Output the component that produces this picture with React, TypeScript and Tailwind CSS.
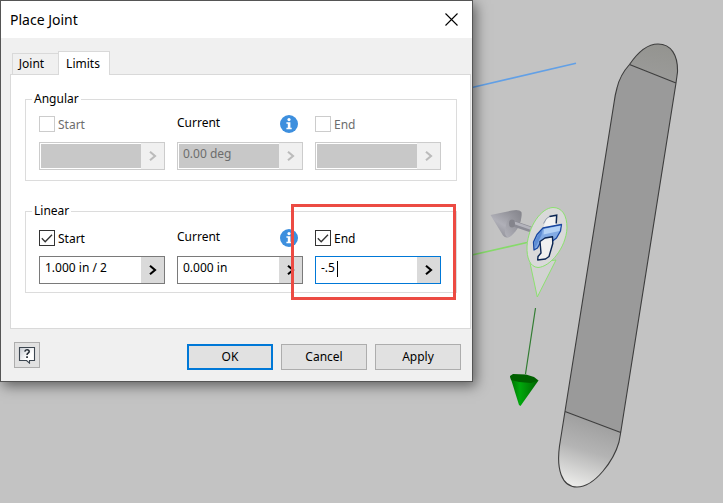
import { useState } from 'react'
import clsx from 'clsx'

export default function App() {
  return (
    <div className="relative min-h-screen overflow-hidden bg-[#c3c3c3] font-['Noto_Sans',sans-serif] text-xs text-black">
      <Scene />
      <PlaceJointDialog />
    </div>
  )
}

function PlaceJointDialog() {
  return (
    <section
      aria-label="Place Joint"
      className="relative w-full max-w-[473px] border border-[#555555] bg-[#f0f0f0] shadow-[3px_4px_12px_rgba(0,0,0,0.5)]"
    >
      <header className="flex h-[37px] items-center justify-between bg-white pr-[14px] pl-[9px]">
        <h1 className="text-sm">Place Joint</h1>
        <button type="button" aria-label="Close">
          <svg viewBox="0 0 13 13" className="size-[13px]" aria-hidden>
            <path d="M.5.5l12 12M12.5.5l-12 12" stroke="#000" strokeWidth="1.1" />
          </svg>
        </button>
      </header>

      <div className="pt-[13px] pr-px pl-[9px]">
        <div role="tablist" className="flex items-end pl-0.5">
          <button
            type="button"
            role="tab"
            aria-selected="false"
            className="h-[21px] w-[46px] border border-r-0 border-b-0 border-[#d9d9d9] pr-2"
          >
            Joint
          </button>
          <button
            type="button"
            role="tab"
            aria-selected="true"
            className="relative -mb-px h-6 w-[52px] border border-b-0 border-[#d9d9d9] bg-white pr-0.5"
          >
            Limits
          </button>
        </div>

        <div className="flex flex-col gap-[22px] border border-[#d9d9d9] bg-white pt-4 pr-[13px] pb-[35px] pl-[14px]">
          <LimitGroup title="Angular" start="" current="0.00 deg" end="" disabled />
          <LimitGroup title="Linear" start="1.000 in / 2" current="0.000 in" end="-.5" marked />
        </div>
      </div>

      <footer className="flex items-start pt-[13px] pr-[11px] pb-[11px] pl-[13px]">
        <button
          type="button"
          aria-label="Help"
          className="flex size-[26px] items-center justify-center border border-[#adadad] bg-[#e1e1e1]"
        >
          <HelpIcon />
        </button>
        <div className="mt-0.5 ml-auto flex gap-2">
          <DialogButton primary>OK</DialogButton>
          <DialogButton>Cancel</DialogButton>
          <DialogButton>Apply</DialogButton>
        </div>
      </footer>
    </section>
  )
}

type LimitGroupProps = {
  title: string
  start: string
  current: string
  end: string
  disabled?: boolean
  marked?: boolean
}

function LimitGroup({ title, start, current, end, disabled, marked }: LimitGroupProps) {
  return (
    <fieldset
      className={clsx(
        'relative h-[90px] border border-[#dcdcdc] pr-[15px] pl-[13px]',
        marked ? 'pt-[11px]' : 'pt-[9px]'
      )}
    >
      <legend className="-ml-[7px] px-0.5 leading-4">{title}</legend>
      <div className="grid grid-cols-3 gap-3">
        <LimitColumn>
          <LimitCheck label="Start" disabled={disabled} />
          <ValueField label={`${title} start value`} value={start} disabled={disabled} />
        </LimitColumn>
        <LimitColumn>
          <div className="flex h-4 items-center justify-between pr-[5px]">
            <span className="pb-0.5">Current</span>
            <InfoIcon />
          </div>
          <ValueField label={`${title} current value`} value={current} disabled={disabled} />
        </LimitColumn>
        <LimitColumn>
          <LimitCheck label="End" disabled={disabled} />
          <ValueField
            label={`${title} end value`}
            value={end}
            disabled={disabled}
            active={marked}
          />
        </LimitColumn>
      </div>
      {marked && (
        <div className="pointer-events-none absolute -top-[15px] right-0 -bottom-4 w-[165px] border-3 border-[#ec4b43]" />
      )}
    </fieldset>
  )
}

function LimitColumn({ children }: { children: React.ReactNode }) {
  return <div className="flex min-w-0 flex-col gap-2.5">{children}</div>
}

function LimitCheck({ label, disabled }: { label: string; disabled?: boolean }) {
  return (
    <label
      className={clsx('flex h-4 items-center gap-[3px]', disabled && 'text-[#6d6d6d]')}
    >
      <span className="relative size-4">
        <input
          type="checkbox"
          defaultChecked={!disabled}
          disabled={disabled}
          className="peer block size-4 appearance-none border border-[#333333] bg-white disabled:border-[#cccccc]"
        />
        <svg
          viewBox="0 0 16 16"
          className="pointer-events-none absolute inset-0 hidden size-4 peer-checked:block"
          aria-hidden
        >
          <path d="M2.8 8.3l3.4 3.4 6.8-7" fill="none" stroke="#333" strokeWidth="1.3" />
        </svg>
      </span>
      <span className="pt-0.5">{label}</span>
    </label>
  )
}

type ValueFieldProps = {
  label: string
  value: string
  disabled?: boolean
  active?: boolean
}

function ValueField({ label, value, disabled, active }: ValueFieldProps) {
  const [text, setText] = useState(value)

  return (
    <div
      className={clsx(
        'relative flex h-7 border bg-white',
        disabled ? 'border-[#cccccc]' : active ? 'border-[#0078d7]' : 'border-[#7a7a7a]'
      )}
    >
      <input
        type="text"
        aria-label={label}
        value={text}
        onChange={(e) => setText(e.target.value)}
        disabled={disabled}
        className="my-px ml-px min-w-0 flex-1 bg-white pb-1 pl-1 outline-none disabled:bg-[#c8c8c8] disabled:text-[#6d6d6d]"
      />
      {active && <span className="absolute top-1 left-[21px] h-4 w-px bg-black" />}
      <button
        type="button"
        aria-label={`${label} options`}
        disabled={disabled}
        className={clsx(
          'flex w-[23px] items-center justify-center',
          disabled ? 'bg-[#f0f0f0] text-[#bbbbbb]' : 'bg-[#dadada] text-black'
        )}
      >
        <svg viewBox="0 0 8 10" className="h-2.5 w-2" aria-hidden>
          <path d="M1 .8l5 4.2-5 4.2" fill="none" stroke="currentColor" strokeWidth="2.1" />
        </svg>
      </button>
    </div>
  )
}

function DialogButton({ primary, children }: { primary?: boolean; children: React.ReactNode }) {
  return (
    <button
      type="button"
      className={clsx(
        'h-[26px] w-[86px] bg-[#e1e1e1]',
        primary ? 'border-2 border-[#0078d7]' : 'border border-[#adadad]'
      )}
    >
      {children}
    </button>
  )
}

function InfoIcon() {
  return (
    <svg viewBox="0 0 18 18" className="size-[18px] flex-none" aria-hidden>
      <circle cx="9" cy="9" r="9" fill="#3d8fde" />
      <circle cx="9" cy="4.6" r="1.6" fill="#fff" />
      <path d="M6.4 7.3h4v5.4h1.3v1.5H6.4v-1.5h1.4V8.8H6.4z" fill="#fff" />
    </svg>
  )
}

function HelpIcon() {
  return (
    <svg viewBox="0 0 18 18" className="size-[18px]" aria-hidden>
      <defs>
        <linearGradient id="help" x1="0" y1="0" x2="1" y2="1">
          <stop offset="0" stopColor="#c6cbd2" />
          <stop offset=".6" stopColor="#fff" />
        </linearGradient>
      </defs>
      <path
        d="M1.5 1.5h15v13h-5v2.6l-2.900-2.600H1.500z"
        fill="url(#help)"
        stroke="#3c4650"
        strokeWidth="1.1"
      />
      <path
        d="M6.800 5.600c.2-1.400 1-1.900 2.200-1.900 1.300 0 2.200.7 2.200 1.800 0 1.700-2.200 1.700-2.200 3.400"
        fill="none"
        stroke="#222a33"
        strokeWidth="1.5"
      />
      <path d="M8.200 10.200h1.700v1.700H8.200z" fill="#222a33" />
    </svg>
  )
}

// 3D viewport behind the dialog: slotted link, joint glyph and axis arrows
function Scene() {
  return (
    <svg
      viewBox="0 0 723 503"
      className="absolute top-0 left-0 h-[503px] w-[723px]"
      aria-hidden
    >
      <defs>
        <linearGradient id="tip" gradientUnits="userSpaceOnUse" x1="598" y1="422" x2="577" y2="487">
          <stop offset="0" stopColor="#9f9f9f" />
          <stop offset=".45" stopColor="#b4b4b4" />
          <stop offset="1" stopColor="#ececea" />
        </linearGradient>
        <linearGradient id="cap" gradientUnits="userSpaceOnUse" x1="657" y1="44" x2="651" y2="75">
          <stop offset="0" stopColor="#949490" />
          <stop offset="1" stopColor="#9a9a98" />
        </linearGradient>
        <linearGradient id="cone" x1="0" x2="1">
          <stop offset="0" stopColor="#006e00" />
          <stop offset=".35" stopColor="#00a80c" />
          <stop offset="1" stopColor="#006400" />
        </linearGradient>
        <linearGradient id="greyCone" x1="0" y1="1" x2=".7" y2="0">
          <stop offset="0" stopColor="#85858d" />
          <stop offset=".5" stopColor="#b0b0b8" />
          <stop offset="1" stopColor="#8b8b92" />
        </linearGradient>
        <linearGradient id="greyFace" x1="0" y1="1" x2="1" y2="0">
          <stop offset="0" stopColor="#b2b2ba" />
          <stop offset="1" stopColor="#84848b" />
        </linearGradient>
      </defs>

      <path d="M472 87.500L576 63.200" stroke="#62a0e6" strokeWidth="1.600" />
      <path d="M472 255L527 242.500" stroke="#86da6a" strokeWidth="1.700" />

      {/* link body */}
      <path d="M629.500 64.500Q620 75 617 88Q615 95 614 103L565 411.500L620.700 432.500L676 83z" fill="#9a9a9a" />
      <path d="M629.500 64.500C638 52 648 44 658 44C671 44 678 55 677.500 72L676 83z" fill="url(#cap)" />
      <path
        d="M565 411.500L559.500 446C556.500 468 561 487 577 487C595 487 614 460 619 442L620.700 432.500z"
        fill="url(#tip)"
      />
      <path
        d="M629.500 64.500C638 52 648 44 658 44C671 44 678 55 677.500 72L676 83L620.700 432.500L619 442C614 460 595 487 577 487C561 487 556.500 468 559.500 446L614 103Q615 95 617 88Q620 75 629.500 64.500zM629.500 64.500L676 83M565 411.500L620.700 432.500"
        fill="none"
        stroke="#3d3d3d"
        strokeWidth="1.100"
      />

      {/* grey axis arrow */}
      <path
        d="M490.500 215L512 210.500Q519 209 521.500 212Q522.500 226 511 236Q506 239 503 235.500z"
        fill="url(#greyCone)"
      />
      <path d="M521 212C515 210 508 216 506 225C504 232 505 237 508 237.500C516 234 523 222 521 212z" fill="url(#greyFace)" />
      <path d="M512 223L531 229.500" stroke="#8c8c95" strokeWidth="6" />
      <path d="M512 222L531 228.500" stroke="#b4b4bc" strokeWidth="2.500" />
      <ellipse cx="512" cy="223.500" rx="3" ry="4" fill="#84848c" />

      {/* joint glyph */}
      <path d="M530 263L537.300 297L556 260z" fill="#d2d2d2" stroke="#8ce070" strokeWidth="1" />
      <path
        d="M553 207.500C562 207.500 567 215 567 228C566 248 550 267 538 267.500C530 267 526.500 258 527 246C528.500 226 541 208 553 207.500z"
        fill="#d9d9d9"
        stroke="#8ce070"
        strokeWidth="1"
      />
      <path d="M543.500 227L546.500 219L550 216L556.500 215L556 225z" fill="#f3f3f3" />
      <path d="M543.500 223.500L546.500 218.500L550 216.300" fill="none" stroke="#8e99ad" strokeWidth="1" />
      <path d="M549.500 216.500L556.700 215.200L556.200 223.500" fill="none" stroke="#0b2552" strokeWidth="1.500" />
      <path
        d="M543 228L561.500 224.500L560.500 231L556.500 238L552.500 241L541 241.500L537.500 248L534 250L533.500 242L537 234.500z"
        fill="#83abe4"
        stroke="#1846a0"
        strokeWidth="1.300"
        strokeLinejoin="round"
      />
      <path d="M544 229L560.500 225.800L559.500 231L543.500 234.500z" fill="#b4d2f6" />
      <path d="M542.500 229.500L541.500 235L535.500 247.500L534.500 242L538 235z" fill="#5d8cd4" />
      <path
        d="M540 241.500L545 238L552.500 236.800L552.800 243.500L549 256.500L545.500 259L537.700 260L538 256.500L541 253z"
        fill="#f0f0f0"
        stroke="#0b2552"
        strokeWidth="1.400"
        strokeLinejoin="round"
      />

      {/* green axis arrow */}
      <path d="M535.500 308L525.500 374" stroke="#337d33" strokeWidth="1.200" />
      <path d="M510 376L538.500 380.500L520.500 406L519 405z" fill="url(#cone)" />
      <path d="M510 376L513 374L526 374.500L534 377L538.500 380.500L531 383L519 382L511 380z" fill="#006000" />
    </svg>
  )
}
